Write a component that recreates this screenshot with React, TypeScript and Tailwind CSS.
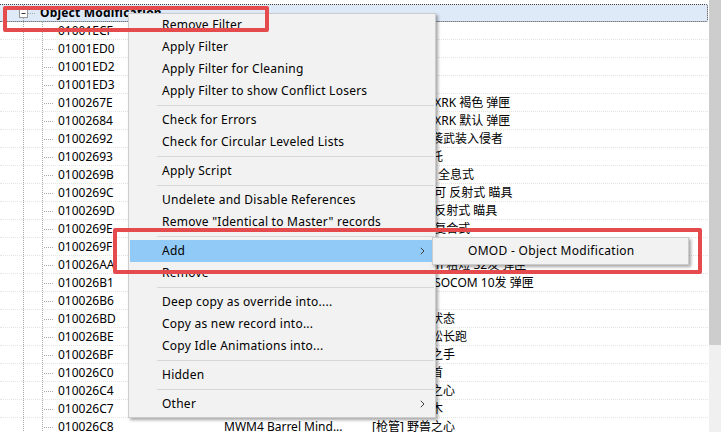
import React from 'react';

const rows: [string, string, string][] = [
  ['01001ECF', '', ''],
  ['01001ED0', '', ''],
  ['01001ED2', '', ''],
  ['01001ED3', '', ''],
  ['0100267E', 'mod_Mag_XRK_Brown', '[弹匣] 冲锋 XRK 褐色 弹匣'],
  ['01002684', 'mod_Mag_XRK_Default', '[弹匣] 冲锋 XRK 默认 弹匣'],
  ['01002692', 'mod_Paint_Raider', '[涂装] 枪突袭武装入侵者'],
  ['01002693', 'mod_Stock_Full', '[枪托] 全枪托'],
  ['0100269B', 'mod_Scope_Holo', '[瞄具] 战术- 全息式'],
  ['0100269C', 'mod_Scope_ReflexAdj', '[瞄具] 大型 可 反射式 瞄具'],
  ['0100269D', 'mod_Scope_Reflex', '[瞄具] 圆形 反射式 瞄具'],
  ['0100269E', 'mod_Scope_Compound', '[瞄具] 圆形 复合式'],
  ['0100269F', 'mod_Scope_None', '[瞄具] 无'],
  ['010026AA', 'mod_Mag_Short32', '[弹匣] 10mm 粗短 32发 弹匣'],
  ['010026B1', 'mod_Mag_SOCOM10', '[弹匣] 冲锋 SOCOM 10发 弹匣'],
  ['010026B6', '', ''],
  ['010026BD', 'mod_Status', '[特效] 传说状态'],
  ['010026BE', 'mod_Legendary_Run', '[传说] 轻轻松长跑'],
  ['010026BF', 'mod_Legendary_Hand', '[传说] 神射之手'],
  ['010026C0', 'mod_Legendary_Sound', '[传说] 声音首'],
  ['010026C4', 'mod_Legendary_Heart', '[传说] 勇者之心'],
  ['010026C7', 'mod_Grip_Wood', '[握把] 胡桃木'],
  ['010026C8', 'MWM4 Barrel Mind...', '[枪管] 野兽之心'],
];

type Entry = { label: string; sub?: boolean; hot?: boolean } | 'sep';

const menu: Entry[] = [
  { label: 'Remove Filter' },
  { label: 'Apply Filter' },
  { label: 'Apply Filter for Cleaning' },
  { label: 'Apply Filter to show Conflict Losers' },
  'sep',
  { label: 'Check for Errors' },
  { label: 'Check for Circular Leveled Lists' },
  'sep',
  { label: 'Apply Script' },
  'sep',
  { label: 'Undelete and Disable References' },
  { label: 'Remove "Identical to Master" records' },
  'sep',
  { label: 'Add', sub: true, hot: true },
  { label: 'Remove' },
  'sep',
  { label: 'Deep copy as override into....' },
  { label: 'Copy as new record into...' },
  { label: 'Copy Idle Animations into...' },
  'sep',
  { label: 'Hidden' },
  'sep',
  { label: 'Other', sub: true },
];

const dot = { stroke: '#a8a8a8', strokeDasharray: '1 1', strokeWidth: 1 };

function RootLines() {
  return (
    <svg width="40" height="16" className="shrink-0">
      <line x1="23.5" y1="0" x2="23.5" y2="4" {...dot} />
      <line x1="23.5" y1="13" x2="23.5" y2="16" {...dot} />
      <line x1="28" y1="8.5" x2="36" y2="8.5" {...dot} />
      <rect x="19.5" y="4.5" width="8" height="8" fill="#fff" stroke="#969696" />
      <line x1="21.5" y1="8.5" x2="25.5" y2="8.5" stroke="#333" />
    </svg>
  );
}

function ChildLines() {
  return (
    <svg width="58" height="17" className="shrink-0">
      <line x1="23.5" y1="0" x2="23.5" y2="18" {...dot} />
      <line x1="42.5" y1="0" x2="42.5" y2="18" {...dot} />
      <line x1="44" y1="9.5" x2="53" y2="9.5" {...dot} />
    </svg>
  );
}

function Chevron() {
  return (
    <svg width="5" height="8" viewBox="0 0 5 8" className="shrink-0">
      <polyline points="0.8,0.8 4,4 0.8,7.2" fill="none" stroke="#404040" strokeWidth="1" />
    </svg>
  );
}

export default function App() {
  return (
    <div className="relative w-[721px] h-[432px] overflow-hidden bg-white flex text-[12px] text-black font-['Noto_Sans','Noto_Sans_CJK_SC',sans-serif]">
      {/* tree */}
      <div className="flex-1 flex flex-col pt-[4px] pr-[1px]">
        <div className="h-[18px] flex items-center bg-[#deeaf8] border-y border-r border-dotted border-[#444] rounded-r-[2px]">
          <RootLines />
          <span className="font-bold leading-[16px] tracking-[0.2px]">Object Modification</span>
        </div>
        {rows.map(([id, edid, name]) => (
          <div key={id} className="h-[18px] flex items-center border-b border-dotted border-[#e4e4e4]">
            <div className="w-[224px] flex items-center shrink-0">
              <ChildLines />
              <span className="leading-[17px]">{id}</span>
            </div>
            <div className="w-[148px] shrink-0 whitespace-nowrap overflow-hidden leading-[17px]">{edid}</div>
            <div className="flex-1 whitespace-nowrap overflow-hidden leading-[17px]">{name}</div>
          </div>
        ))}
      </div>

      {/* scrollbar */}
      <div className="w-[12px] flex flex-col">
        <div className="h-[345px] bg-[#cdcdcd]" />
        <div className="flex-1 bg-[#f0f0f0]" />
      </div>

      {/* context menu */}
      <div className="absolute left-[128px] top-[13px] w-[308px] bg-[#f2f2f2] border border-[#cccccc] px-[1px] pb-[2px] tracking-[0.25px] shadow-[2px_2px_3px_rgba(0,0,0,0.35)]">
        {menu.map((m, i) =>
          m === 'sep' ? (
            <div key={i} className="h-[7px] flex items-center pl-[27px]">
              <div className="h-px w-full bg-[#d7d7d7]" />
            </div>
          ) : (
            <div
              key={i}
              className={`h-[22px] flex items-center pl-[32px] pr-[9px] whitespace-nowrap ${m.hot ? 'bg-[#91c9f7]' : ''}`}
            >
              <span className="flex-1 leading-[22px]">{m.label}</span>
              {m.sub && <Chevron />}
            </div>
          )
        )}
      </div>

      {/* submenu */}
      <div className="absolute left-[432px] top-[237px] w-[257px] bg-[#f2f2f2] border border-[#cccccc] p-[2px] tracking-[0.3px] shadow-[2px_2px_3px_rgba(0,0,0,0.35)]">
        <div className="h-[22px] flex items-center pl-[33px] leading-[22px]">OMOD - Object Modification</div>
      </div>

      {/* annotations */}
      <div className="absolute left-[3px] top-[6px] w-[266px] h-[26px] border-[4px] border-[#e54b4d] rounded-[2px]" />
      <div className="absolute left-[113px] top-[228px] w-[589px] h-[46px] border-[4px] border-[#e54b4d] rounded-[2px]" />
    </div>
  );
}
